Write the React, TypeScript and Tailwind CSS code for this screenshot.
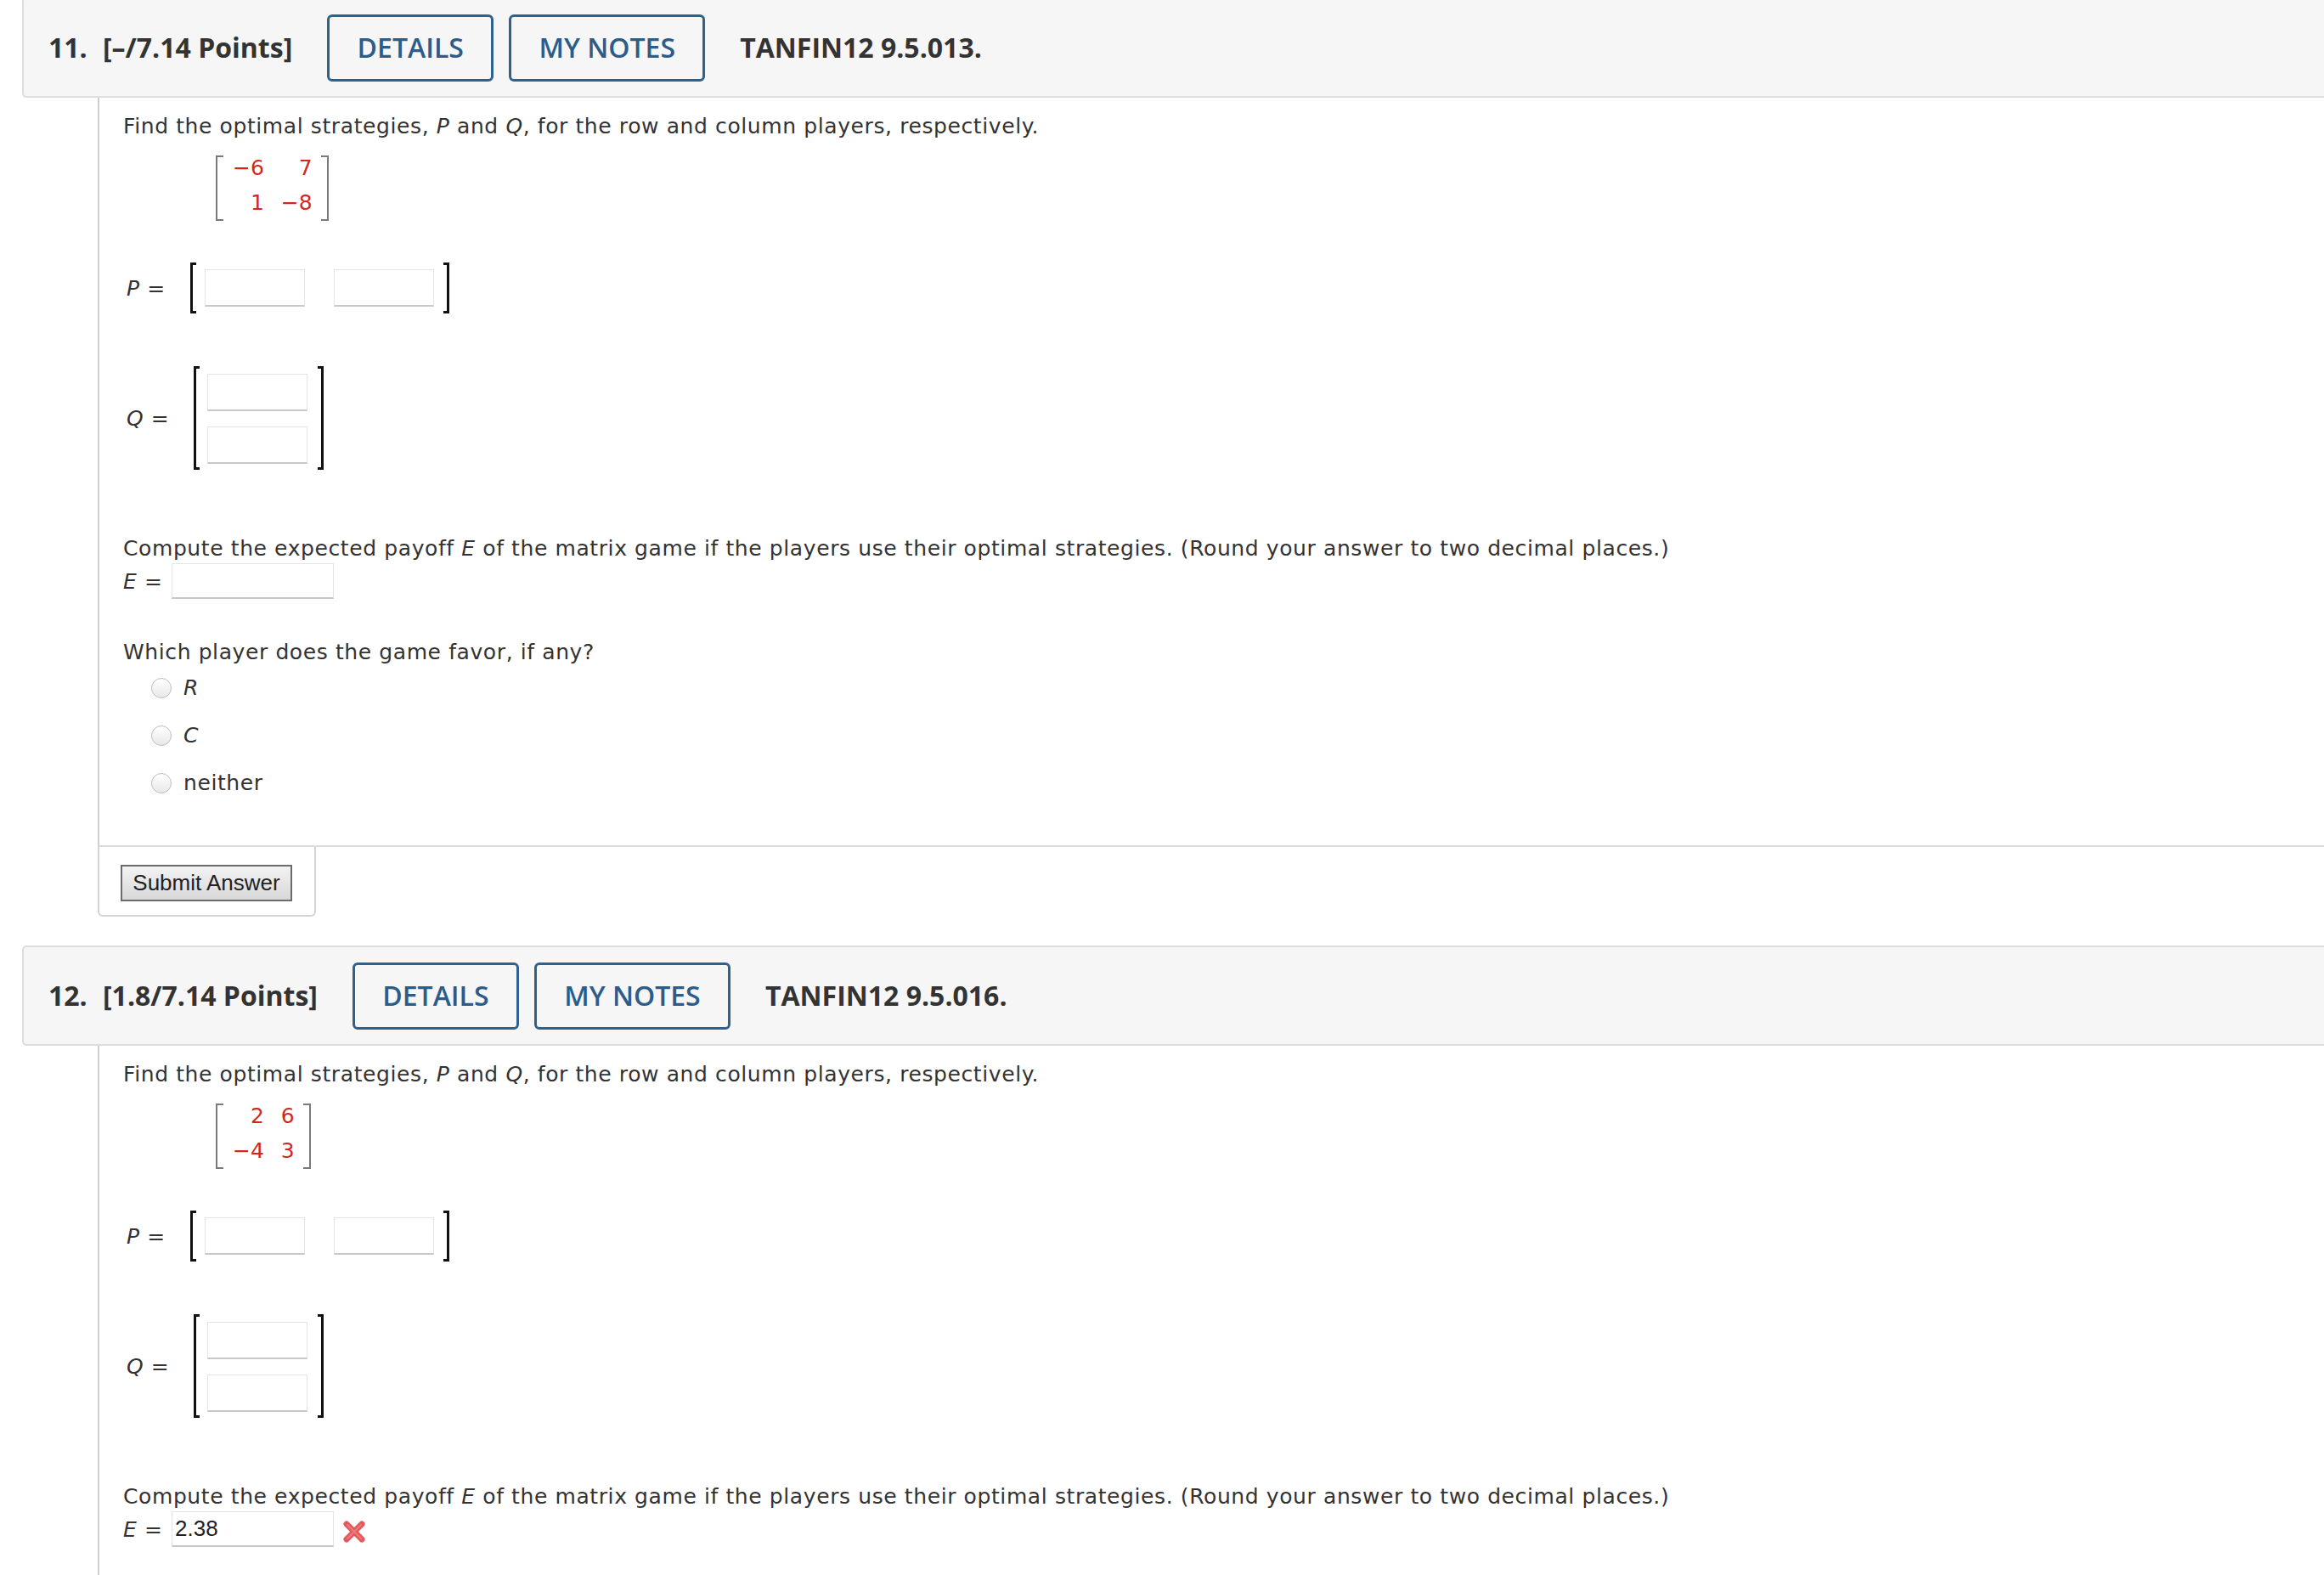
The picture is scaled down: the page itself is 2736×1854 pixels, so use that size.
import React from "react";

const bodyFont = "font-['DejaVu_Sans',Verdana,sans-serif] text-[25px] tracking-[0.6px] text-[#333]";

function Header({ num, points, code, first }: { num: string; points: string; code: string; first?: boolean }) {
  return (
    <div
      className={`flex items-center shrink-0 h-[118px] ml-[26px] bg-[#f6f6f6] border-2 border-r-0 border-[#dedede] rounded-l-[5px] pl-[29px] font-['Open_Sans',sans-serif] text-[32px] text-[#333] ${first ? "-mt-[3px]" : "mt-[34px]"}`}
    >
      <span className="font-bold w-[64px]">{num}</span>
      <span className="font-bold">{points}</span>
      <div className="ml-[41px] w-[196px] h-[79px] border-[3px] border-[#2f6190] rounded-[6px] flex items-center justify-center font-semibold text-[#2c5c8a]">
        DETAILS
      </div>
      <div className="ml-[18px] w-[231px] h-[79px] border-[3px] border-[#2f6190] rounded-[6px] flex items-center justify-center font-semibold text-[#2c5c8a]">
        MY NOTES
      </div>
      <span className="ml-[41px] font-bold">{code}</span>
    </div>
  );
}

function GivenMatrix({ rows }: { rows: string[][] }) {
  return (
    <div className="flex ml-[109px] mt-[22px] h-[77px] tracking-normal">
      <div className="w-[9px] border-l-2 border-t-2 border-b-2 border-[#7a7a7a]" />
      <div className="grid grid-cols-[auto_auto] content-start gap-x-[20px] gap-y-[13px] pt-[1px] pl-[11px] pr-[10px] text-right text-[#d0281e] text-[25px] leading-[28px]">
        {rows.flat().map((v, i) => (
          <span key={i}>{v}</span>
        ))}
      </div>
      <div className="w-[9px] border-r-2 border-t-2 border-b-2 border-[#7a7a7a]" />
    </div>
  );
}

function Box({ w = 118, val }: { w?: number; val?: string }) {
  return (
    <div
      className={`${w === 118 ? "w-[118px] h-[44px]" : "w-[191px] h-[42px]"} bg-white border border-[#e4e4e4] border-b-2 border-b-[#c8c8c8] flex items-center pl-[3px] font-['Liberation_Sans',Arial,sans-serif] text-[26px] tracking-normal text-[#222]`}
    >
      {val}
    </div>
  );
}

function LBr() {
  return <div className="w-[7px] self-stretch border-l-[3px] border-t-[3px] border-b-[3px] border-[#111]" />;
}
function RBr() {
  return <div className="w-[7px] self-stretch border-r-[3px] border-t-[3px] border-b-[3px] border-[#111]" />;
}

function Radio({ children }: { children: React.ReactNode }) {
  return (
    <div className="flex items-center h-[56px] ml-[33px]">
      <div className="w-[24px] h-[24px] rounded-full border border-[#bdbdbd] bg-linear-to-b from-white to-[#e8e8e8]" />
      <span className="ml-[14px] leading-[28px]">{children}</span>
    </div>
  );
}

function XIcon() {
  return (
    <svg width="28" height="28" viewBox="0 0 28 28" className="ml-[10px] mt-[6px]">
      <line x1="5" y1="5" x2="23" y2="23" stroke="#e4595b" strokeWidth="7" strokeLinecap="round" />
      <line x1="23" y1="5" x2="5" y2="23" stroke="#e4595b" strokeWidth="7" strokeLinecap="round" />
      <line x1="6" y1="6" x2="22" y2="22" stroke="#ee7b7c" strokeWidth="2" strokeLinecap="round" />
      <line x1="22" y1="6" x2="6" y2="22" stroke="#ee7b7c" strokeWidth="2" strokeLinecap="round" />
    </svg>
  );
}

function Question({ matrix, eVal, last }: { matrix: string[][]; eVal?: string; last?: boolean }) {
  return (
    <>
      <div
        className={`ml-[115px] border-l-2 border-[#cfcfcf] pl-[28px] ${last ? "flex-1" : "border-b-2 border-b-[#dcdcdc] pb-[45px]"} pt-[18px] ${bodyFont}`}
      >
        <div className="h-[28px] leading-[31px]">
          Find the optimal strategies, <i>P</i> and <i>Q</i>, for the row and column players, respectively.
        </div>
        <GivenMatrix rows={matrix} />
        <div className="flex items-center mt-[49px] h-[60px]">
          <div className="w-[79px] pl-[4px] pt-[2px] leading-[28px]">
            <i>P</i> =
          </div>
          <LBr />
          <div className="ml-[10px]">
            <Box />
          </div>
          <div className="ml-[34px] mr-[11px]">
            <Box />
          </div>
          <RBr />
        </div>
        <div className="flex items-center mt-[62px] h-[122px]">
          <div className="w-[83px] pl-[4px] pt-[2px] leading-[28px]">
            <i>Q</i> =
          </div>
          <LBr />
          <div className="flex flex-col ml-[9px] mr-[12px] gap-[18px] pt-[1px]">
            <Box />
            <Box />
          </div>
          <RBr />
        </div>
        <div className="mt-[77px] h-[28px] leading-[31px]">
          Compute the expected payoff <i>E</i> of the matrix game if the players use their optimal strategies. (Round your answer to two decimal places.)
        </div>
        <div className="flex items-center mt-[5px] h-[42px]">
          <div className="w-[57px] pt-[2px] leading-[28px]">
            <i>E</i> =
          </div>
          <Box w={191} val={eVal} />
          {eVal ? <XIcon /> : null}
        </div>
        {last ? null : (
          <>
            <div className="mt-[47px] h-[28px] leading-[31px]">Which player does the game favor, if any?</div>
            <div className="mt-[2px]">
              <Radio>
                <i>R</i>
              </Radio>
              <Radio>
                <i>C</i>
              </Radio>
              <Radio>neither</Radio>
            </div>
          </>
        )}
      </div>
      {last ? null : (
        <div className="shrink-0 ml-[115px] w-[257px] h-[82px] border-l-2 border-r-2 border-b-2 border-[#d4d4d4] rounded-b-[6px] pt-[21px] pl-[25px]">
          <div className="w-[202px] h-[43px] border-2 border-[#6b6b6b] bg-linear-to-b from-[#f3f3f3] to-[#d8d8d8] flex items-center justify-center font-['Liberation_Sans',Arial,sans-serif] text-[26px] text-[#222]">
            Submit Answer
          </div>
        </div>
      )}
    </>
  );
}

export default function App() {
  return (
    <div className="w-[2736px] h-[1854px] overflow-hidden bg-white flex flex-col">
      <Header first num="11." points="[–/7.14 Points]" code="TANFIN12 9.5.013." />
      <Question
        matrix={[
          ["−6", "7"],
          ["1", "−8"],
        ]}
      />
      <Header num="12." points="[1.8/7.14 Points]" code="TANFIN12 9.5.016." />
      <Question
        last
        eVal="2.38"
        matrix={[
          ["2", "6"],
          ["−4", "3"],
        ]}
      />
    </div>
  );
}
